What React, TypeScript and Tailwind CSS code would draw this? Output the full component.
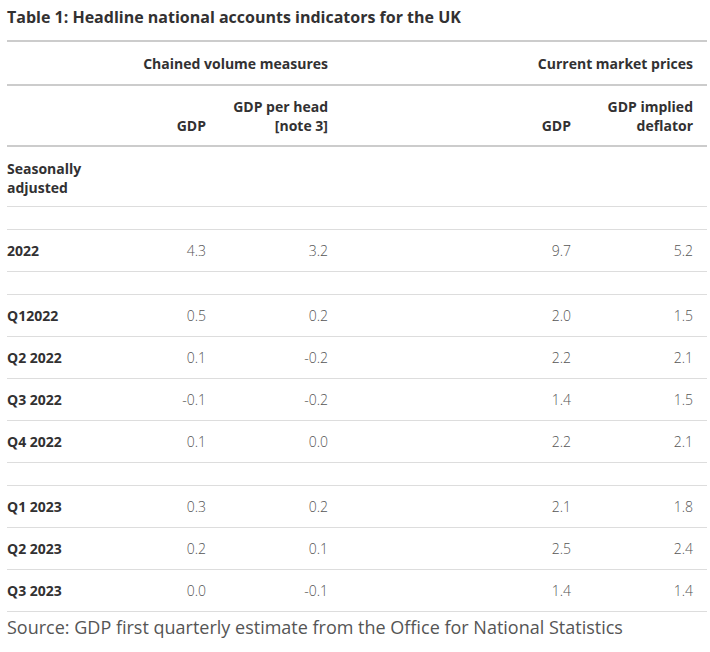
const rows: ({ label: string; values: string[] } | null)[] = [
  null,
  { label: "2022", values: ["4.3", "3.2", "9.7", "5.2"] },
  null,
  { label: "Q12022", values: ["0.5", "0.2", "2.0", "1.5"] },
  { label: "Q2 2022", values: ["0.1", "-0.2", "2.2", "2.1"] },
  { label: "Q3 2022", values: ["-0.1", "-0.2", "1.4", "1.5"] },
  { label: "Q4 2022", values: ["0.1", "0.0", "2.2", "2.1"] },
  null,
  { label: "Q1 2023", values: ["0.3", "0.2", "2.1", "1.8"] },
  { label: "Q2 2023", values: ["0.2", "0.1", "2.5", "2.4"] },
  { label: "Q3 2023", values: ["0.0", "-0.1", "1.4", "1.4"] },
];

const cols = "grid grid-cols-[91px_122px_122px_243px_122px]";

export default function App() {
  return (
    <div className="min-h-screen bg-white font-['Open_Sans',sans-serif] text-[#323132]">
      <div className="ml-[7px] w-[700px]">
        <h1 className="pt-[5px] h-[40px] text-[16px] font-bold leading-[24px]">
          Table 1: Headline national accounts indicators for the UK
        </h1>

        <div className="border-t-[2px] border-[#cccccc]">
          {/* group headers */}
          <div className={`${cols} h-[44px] items-center border-b-[2px] border-[#cccccc] text-[14px] font-bold`}>
            <div />
            <div className="col-span-2 pr-[14px] text-right">Chained volume measures</div>
            <div className="col-span-2 pr-[14px] text-right">Current market prices</div>
          </div>

          {/* column headers */}
          <div className={`${cols} h-[61px] items-end border-b-[2px] border-[#cccccc] pb-[10px] text-[14px] font-bold leading-[19px]`}>
            <div />
            <div className="pr-[14px] text-right">GDP</div>
            <div className="pr-[14px] text-right">
              GDP per head
              <br />
              [note 3]
            </div>
            <div className="pr-[14px] text-right">GDP</div>
            <div className="pr-[14px] text-right">
              GDP implied
              <br />
              deflator
            </div>
          </div>

          <div className="h-[60px] border-b border-[#dddddd] pt-[12px] text-[14px] font-bold leading-[19px]">
            Seasonally
            <br />
            adjusted
          </div>

          {rows.map((row, i) =>
            row === null ? (
              <div key={i} className="h-[23px] border-b border-[#dddddd]" />
            ) : (
              <div key={i} className={`${cols} h-[42px] items-center border-b border-[#dddddd] text-[14px]`}>
                <div className="font-bold">{row.label}</div>
                {row.values.map((v, j) => (
                  <div key={j} className="pr-[14px] text-right font-light text-[#555555]">
                    {v}
                  </div>
                ))}
              </div>
            )
          )}
        </div>

        <p className="pt-[3px] text-[18px] leading-[24px] text-[#555555]">
          Source: GDP first quarterly estimate from the Office for National Statistics
        </p>
      </div>
    </div>
  );
}
